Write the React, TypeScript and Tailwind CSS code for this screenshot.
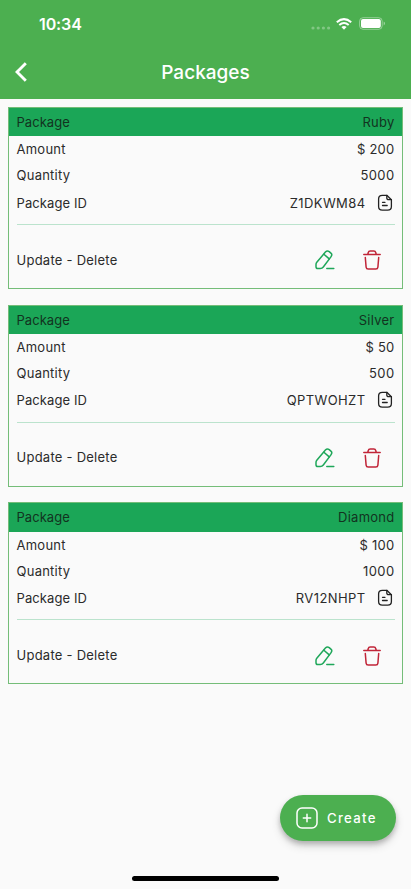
interface PackageItem {
  name: string;
  amount: string;
  quantity: string;
  code: string;
}

const packages: PackageItem[] = [
  { name: "Ruby", amount: "$ 200", quantity: "5000", code: "Z1DKWM84" },
  { name: "Silver", amount: "$ 50", quantity: "500", code: "QPTWOHZT" },
  { name: "Diamond", amount: "$ 100", quantity: "1000", code: "RV12NHPT" },
];

function DocumentIcon() {
  return (
    <svg width="16" height="18" viewBox="0 0 16 18" fill="none" stroke="#222" strokeWidth="1.3" strokeLinecap="round" strokeLinejoin="round">
      <path d="M9.8 1.3H5.3Q1.6 1.3 1.6 5V12.5Q1.6 16.2 5.3 16.2H10.7Q14.4 16.2 14.4 12.5V5.7Z" />
      <path d="M9.8 1.3V3.9Q9.8 5.7 11.6 5.7H14.4" />
      <path d="M5.5 8.3H8M5.5 11.5H10.2" />
    </svg>
  );
}

function EditIcon() {
  return (
    <svg width="20" height="20" viewBox="0 0 20 20" fill="none" stroke="#1fa75a" strokeWidth="1.5" strokeLinecap="round" strokeLinejoin="round">
      <path d="M10.4 2.1Q12.2 .1 14.2 1.6L15.9 3.1Q17.6 4.6 16.1 6.6L8.3 17Q7.2 18.5 5.3 18.5H2.8Q1 18.5 1 16.7V14.6Q1 13.3 1.8 12.3Z" />
      <path d="M8.9 4.2L14.2 8.9M11.8 18.5H18.8" />
    </svg>
  );
}

function TrashIcon() {
  return (
    <svg width="18" height="20" viewBox="0 0 18 20" fill="none" stroke="#c12538" strokeWidth="1.5" strokeLinecap="round" strokeLinejoin="round">
      <path d="M.8 4.5H17.2M4.8 4.3L5.2 2.7Q5.6 1.1 7.2 1.1H10.8Q12.4 1.1 12.8 2.7L13.2 4.3" />
      <path d="M2.3 7.5L3.1 17.1Q3.3 19 5.2 19H12.8Q14.7 19 14.9 17.1L15.7 7.5" />
    </svg>
  );
}

function StatusBar() {
  return (
    <div className="flex h-[47px] items-center justify-between pl-[39px] pr-[25px]">
      <span className="text-[16px] leading-[20px] font-semibold tracking-[-0.1px]">10:34</span>
      <div className="flex items-center">
        <svg width="20" height="4" viewBox="0 0 20 4" fill="#fff" fillOpacity=".3" className="mt-[9px]">
          <circle cx="2" cy="2" r="1.6" />
          <circle cx="7.2" cy="2" r="1.6" />
          <circle cx="12.4" cy="2" r="1.6" />
          <circle cx="17.6" cy="2" r="1.6" />
        </svg>
        <svg width="16" height="12" viewBox="0 0 16 12" fill="none" stroke="#fff" strokeWidth="2" className="ml-[5px]">
          <path d="M.8 4.2Q8-2 15.2 4.2M3.3 7Q8 2.9 12.7 7" />
          <path d="M5.4 9Q8 6.8 10.6 9L8 11.7Z" fill="#fff" stroke="none" />
        </svg>
        <svg width="27" height="13" viewBox="0 0 27 13" fill="none" className="ml-[7px]">
          <rect x=".6" y=".7" width="22.6" height="11.6" rx="3.5" stroke="#fff" strokeOpacity=".4" />
          <rect x="2" y="2.1" width="19.8" height="8.8" rx="2" fill="#fff" />
          <path d="M24.7 4.6V8.4Q26 7.8 26 6.5T24.7 4.6Z" fill="#fff" fillOpacity=".45" />
        </svg>
      </div>
    </div>
  );
}

function PackageCard({ item }: { item: PackageItem }) {
  return (
    <section className="flex h-[182px] flex-col border border-[#74bd78] text-[13px] leading-[16px] tracking-[0.25px] text-[#2b2b2b]">
      <div className="flex h-[28.2px] shrink-0 items-center justify-between bg-[#1ba657] px-[7.5px] text-[#12331f]">
        <span className="tracking-[0.05px]">Package</span>
        <span>{item.name}</span>
      </div>
      <div className="flex h-[26px] items-center justify-between px-[7.5px]">
        <span>Amount</span>
        <span>{item.amount}</span>
      </div>
      <div className="flex h-[26px] items-center justify-between px-[7.5px]">
        <span>Quantity</span>
        <span className="tracking-[0.4px]">{item.quantity}</span>
      </div>
      <div className="flex h-[28.8px] items-center justify-between px-[7.5px]">
        <span className="tracking-[0.1px]">Package ID</span>
        <div className="flex items-center gap-[11px] pr-[2px]">
          <span className="tracking-[0.4px]">{item.code}</span>
          <DocumentIcon />
        </div>
      </div>
      <div className="mx-[7.5px] mt-[7px] h-px shrink-0 bg-[#bbe3cd]" />
      <div className="flex flex-1 items-center justify-between pt-[7.5px] pr-[21px] pl-[7.5px]">
        <span className="-mt-px">Update - Delete</span>
        <div className="flex items-center gap-[28px]">
          <EditIcon />
          <TrashIcon />
        </div>
      </div>
    </section>
  );
}

export default function App() {
  return (
    <div className="relative flex h-[889px] w-[411px] flex-col overflow-hidden bg-[#fafafa] font-['Inter',sans-serif]">
      <header className="h-[99px] shrink-0 bg-[#4caf50] text-white">
        <StatusBar />
        <div className="grid h-[51px] grid-cols-[1fr_auto_1fr] items-center">
          <svg width="12" height="20" viewBox="0 0 12 20" fill="none" stroke="#fff" strokeWidth="2.9" className="mb-[2px] ml-[15px]">
            <path d="M10.8 1.2L2 10L10.8 18.8" />
          </svg>
          <h1 className="text-[19px] leading-[24px] font-medium">Packages</h1>
        </div>
      </header>
      <main className="flex flex-col gap-[15.7px] px-[8px] pt-[8px]">
        {packages.map((item) => (
          <PackageCard key={item.code} item={item} />
        ))}
      </main>
      <button className="absolute right-[15px] bottom-[48px] flex h-[46px] w-[116px] items-center rounded-full bg-[#4caf50] pl-[16px] text-white shadow-[0_3px_5px_rgba(0,0,0,0.2),0_5px_10px_rgba(0,0,0,0.14)]">
        <svg width="22" height="22" viewBox="0 0 22 22" fill="none" stroke="#fff" strokeWidth="1.5" strokeLinecap="round">
          <rect x="1" y="1" width="20" height="20" rx="5" />
          <path d="M11 7.3V14.7M7.3 11H14.7" />
        </svg>
        <span className="ml-[9px] text-[13.2px] leading-[16px] font-medium tracking-[1.3px]">Create</span>
      </button>
      <div className="absolute bottom-[8px] left-[132px] h-[5px] w-[147px] rounded-full bg-black" />
    </div>
  );
}
